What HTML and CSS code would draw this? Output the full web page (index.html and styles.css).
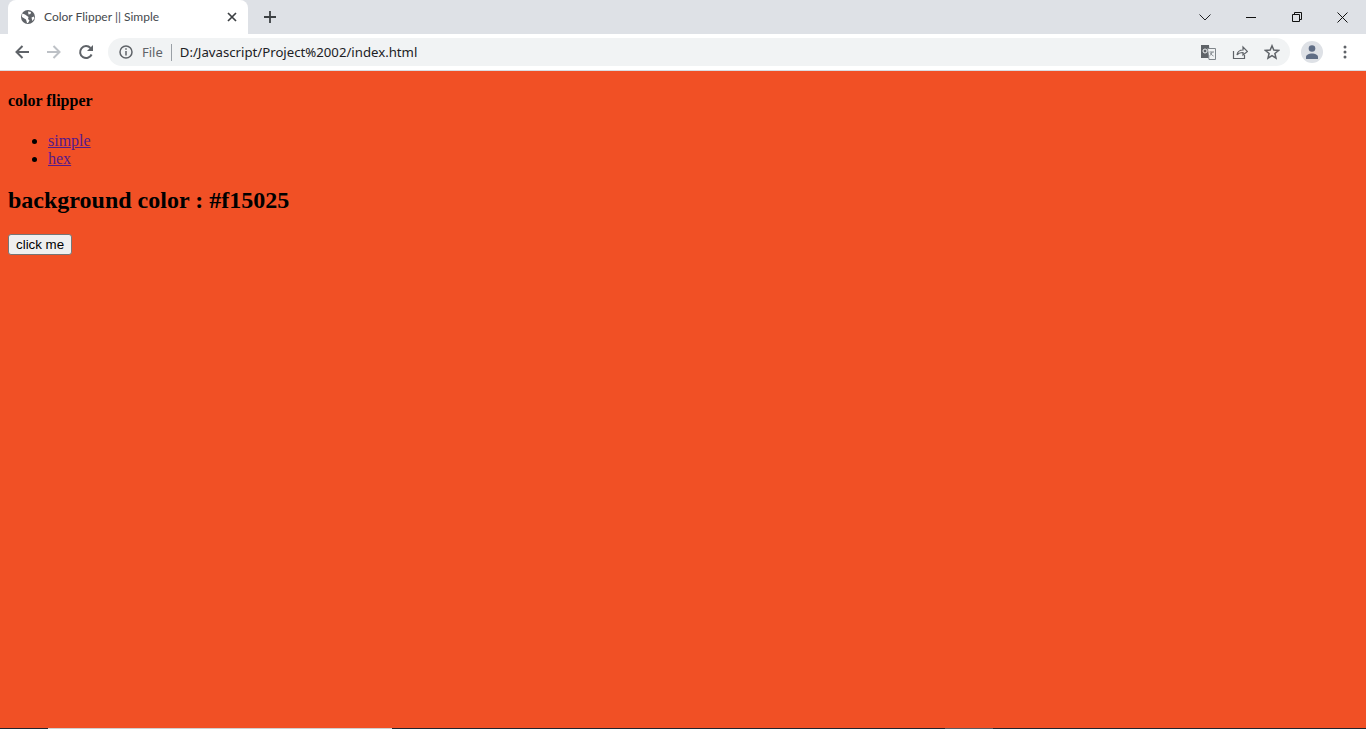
FILE: index.html
```html
<!DOCTYPE html>
<html lang="en">
<head>
    <meta charset="UTF-8">
    <title>Color Flipper || Simple</title>
    <link rel="stylesheet" href="styles.css">
</head>
<body>
    <header class="chrome">
        <div class="tab-strip">
            <div class="tab">
                <svg class="favicon" width="16" height="16" viewBox="0 0 16 16">
                    <circle cx="8" cy="8" r="7" fill="#5f6368"/>
                    <path d="M2.200 4.500L5 5.500l3.500 2.500-.5 2 1.500 1.500-1.500 2.500H7l-1-3.500L2 8z M8 2.500l3 .5-.5 2-2 .5z M11.500 8.500l2.500-1 .3 2-2 2.500z" fill="#fff"/>
                </svg>
                <span class="tab-title">Color Flipper || Simple</span>
                <svg class="tab-close" width="10" height="10" viewBox="0 0 10 10">
                    <path d="M1 1l8 8M9 1l-8 8" stroke="#3c4043" stroke-width="1.700" fill="none"/>
                </svg>
            </div>
            <svg class="new-tab" width="12" height="12" viewBox="0 0 12 12">
                <path d="M6 0v12M0 6h12" stroke="#3c4043" stroke-width="1.800" fill="none"/>
            </svg>
            <div class="window-controls">
                <svg class="caret" width="12" height="7" viewBox="0 0 12 7">
                    <path d="M.5.5L6 6l5.500-5.500" stroke="#202124" fill="none"/>
                </svg>
                <svg class="win-btn win-min" width="10" height="10" viewBox="0 0 10 10">
                    <path d="M0 5.500h10" stroke="#111" fill="none"/>
                </svg>
                <svg class="win-btn" width="10" height="10" viewBox="0 0 10 10">
                    <path d="M.5 2.500h7v7h-7zM2.500 2.500v-2h7v7h-2" stroke="#111" fill="none"/>
                </svg>
                <svg class="win-btn" width="11" height="11" viewBox="0 0 11 11">
                    <path d="M.5.5l10 10M10.500.5l-10 10" stroke="#111" fill="none"/>
                </svg>
            </div>
        </div>
        <div class="toolbar">
            <svg class="nav-icon" width="16" height="16" viewBox="0 0 16 16">
                <path d="M15 8H2.500M8.500 2L2.500 8l6 6" stroke="#5f6368" stroke-width="2" fill="none"/>
            </svg>
            <svg class="nav-icon" width="16" height="16" viewBox="0 0 16 16">
                <path d="M1 8h12.500M7.500 2l6 6-6 6" stroke="#bdc1c6" stroke-width="2" fill="none"/>
            </svg>
            <svg class="nav-icon" width="16" height="16" viewBox="0 0 16 16">
                <path d="M13.600 10.500A6 6 0 1 1 12.500 4" stroke="#5f6368" stroke-width="2" fill="none"/>
                <path d="M15 1v6H9z" fill="#5f6368"/>
            </svg>
            <div class="omnibox">
                <svg class="info-icon" width="14" height="14" viewBox="0 0 14 14">
                    <circle cx="7" cy="7" r="6" stroke="#5f6368" stroke-width="1.500" fill="none"/>
                    <path d="M7 6v4.500M7 3.200v1.600" stroke="#5f6368" stroke-width="1.500" fill="none"/>
                </svg>
                <span class="scheme">File</span>
                <span class="divider"></span>
                <span class="url">D:/Javascript/Project%2002/index.html</span>
                <div class="omni-actions">
                    <svg width="16" height="16" viewBox="0 0 16 16">
                        <path d="M1 1h8l1 13H1z" fill="#5f6368"/>
                        <path d="M7.500 4.500h8v11H9z" fill="#f1f3f4" stroke="#80868b"/>
                        <circle cx="5" cy="7" r="2" stroke="#f1f3f4" fill="none"/>
                        <path d="M9.500 8h4.500M12 8c-.3 2-1.300 3-2.500 4M10.500 9c.5 1.300 1.500 2.300 3 3" stroke="#80868b" fill="none"/>
                    </svg>
                    <svg width="16" height="16" viewBox="0 0 16 16">
                        <path d="M1.500 7v7.500h11V11" stroke="#5f6368" stroke-width="1.200" fill="none"/>
                        <path d="M5 11c.5-3.500 3-5 6-5V3l4.500 4.500L11 11V8.500c-2.500 0-4.500.5-6 2.500z" stroke="#5f6368" stroke-width="1.200" fill="none"/>
                    </svg>
                    <svg width="16" height="16" viewBox="0 0 16 16">
                        <path d="M8 1.800l1.800 4.300 4.700.4-3.600 3 1.100 4.600L8 11.700l-4 2.400 1.100-4.600-3.600-3 4.700-.4z" stroke="#5f6368" stroke-width="1.500" fill="none"/>
                    </svg>
                </div>
            </div>
            <div class="avatar">
                <svg width="16" height="14" viewBox="0 0 16 14">
                    <circle cx="8" cy="3.500" r="3.300" fill="#5f6d85"/>
                    <path d="M2 14v-2c0-2 3-3.500 6-3.500s6 1.500 6 3.500v2z" fill="#5f6d85"/>
                </svg>
            </div>
            <svg class="menu-dots" width="4" height="14" viewBox="0 0 4 14">
                <circle cx="2" cy="2" r="1.500" fill="#5f6368"/>
                <circle cx="2" cy="7" r="1.500" fill="#5f6368"/>
                <circle cx="2" cy="12" r="1.500" fill="#5f6368"/>
            </svg>
        </div>
    </header>

    <main class="page">
        <h4>color flipper</h4>
        <ul>
            <li><a href="#" class="visited">simple</a></li>
            <li><a href="#" class="visited">hex</a></li>
        </ul>
        <h2>background color : #f15025</h2>
        <button class="btn">click me</button>
    </main>

    <div class="taskbar-edge">
        <span class="edge-light"></span>
        <span class="edge-grey"></span>
    </div>
</body>
</html>
```

FILE: styles.css
```css
* {
    box-sizing: border-box;
}

html, body {
    height: 100%;
}

body {
    margin: 0;
    display: flex;
    flex-direction: column;
    background-color: #f15025;
    overflow: hidden;
}

.chrome {
    height: 71px;
    flex-shrink: 0;
    background-color: #fff;
    border-bottom: 1px solid #dadce0;
    font-family: 'Noto Sans', 'Open Sans', sans-serif;
}

.tab-strip {
    height: 34px;
    padding-left: 8px;
    background-color: #dee1e6;
    display: flex;
    align-items: flex-end;
}

.tab {
    width: 240px;
    height: 34px;
    padding: 0 11px 0 12px;
    background-color: #fff;
    border-radius: 8px 8px 0 0;
    display: flex;
    align-items: center;
}

.favicon {
    flex-shrink: 0;
    margin-right: 8px;
}

.tab-title {
    flex-grow: 1;
    padding-bottom: 2px;
    font-family: 'Lato', 'Noto Sans', sans-serif;
    font-size: 12px;
    color: #45494e;
}

.new-tab {
    margin: 0 0 11px 16px;
}

.window-controls {
    margin-left: auto;
    height: 34px;
    display: flex;
    align-items: center;
}

.caret {
    margin-right: 35px;
}

.win-btn {
    margin-right: 35px;
}

.win-min {
    margin-right: 36px;
}

.win-btn:last-child {
    margin-right: 18px;
}

.toolbar {
    height: 36px;
    padding: 0 19px 0 14px;
    display: flex;
    align-items: center;
}

.nav-icon {
    flex-shrink: 0;
    margin-right: 16px;
}

.omnibox {
    flex-grow: 1;
    height: 28px;
    margin: 0 11px 0 -2px;
    padding: 0 10px 0 11px;
    background-color: #f1f3f4;
    border-radius: 14px;
    display: flex;
    align-items: center;
    font-size: 13.200px;
}

.info-icon {
    margin-right: 9px;
}

.scheme {
    color: #5f6368;
    font-size: 13px;
}

.divider {
    width: 1px;
    height: 17px;
    margin: 0 8px 0 8px;
    background-color: #9aa0a6;
}

.url {
    color: #202124;
}

.omni-actions {
    margin-left: auto;
    display: flex;
    gap: 16px;
}

.avatar {
    width: 22px;
    height: 22px;
    margin-right: 20px;
    border-radius: 50%;
    background-color: #dee1e6;
    display: flex;
    align-items: flex-end;
    justify-content: center;
    padding-bottom: 4px;
}

.page {
    flex-grow: 1;
    padding: 0 8px;
    display: flow-root;
    font-family: 'Liberation Serif', serif;
    color: #000;
}

.page a {
    color: #0000ee;
}

.page a.visited {
    color: #551a8b;
}

.btn {
    font-family: 'Liberation Sans', sans-serif;
    font-size: 13.333px;
    padding: 2px 7px;
    background-color: #efefef;
    color: #000;
    border: 1px solid #767676;
    border-radius: 3px;
}

.taskbar-edge {
    height: 1px;
    flex-shrink: 0;
    background-color: #23252e;
    display: flex;
}

.edge-light {
    width: 344px;
    margin-left: 48px;
    background-color: #d0cfcf;
}

.edge-grey {
    width: 48px;
    margin-left: 553px;
    background-color: #5c5c62;
}
```
